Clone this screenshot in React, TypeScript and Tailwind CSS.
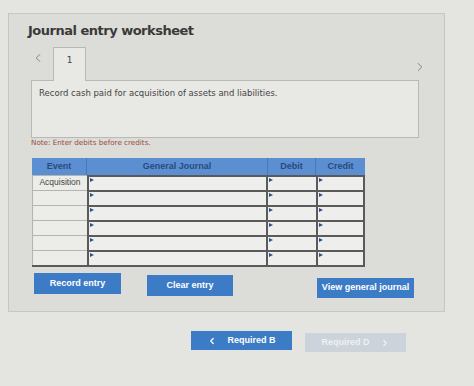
import { ChevronLeft, ChevronRight } from 'lucide-react';

const rows = ['Acquisition', '', '', '', '', ''];

const Marker = () => (
  <span className="absolute left-[1px] top-[1px] h-0 w-0 border-y-[2.5px] border-l-[4px] border-y-transparent border-l-[#2d4f86]" />
);

const App = () => {
  return (
    <div className="h-[386px] w-[474px] overflow-hidden bg-[#e4e4e0] pt-[13px] font-['DejaVu_Sans',sans-serif] text-[#333]">
      {/* Worksheet card */}
      <div className="ml-[8px] h-[299px] w-[437px] border border-[#c6c6c2] bg-[#dcdcd8] pl-[22px]">
        <h1 className="-ml-[3px] pt-[7px] text-[13px] font-bold leading-[20px] tracking-[-0.5px] text-[#3a3a3a]">
          Journal entry worksheet
        </h1>

        {/* Tabs */}
        <div className="mt-[6px] flex h-[33px] items-start">
          <ChevronLeft className="mt-[4px] h-[14px] w-[14px] text-[#777]" strokeWidth={1.5} />
          <div className="ml-[8px] flex h-[34px] w-[33px] justify-center border border-b-0 border-[#b8b8b4] bg-[#e8e8e5] pt-[6px] text-[9px] text-[#444]">
            1
          </div>
          <ChevronRight className="ml-[327px] mt-[13px] h-[14px] w-[14px] text-[#777]" strokeWidth={1.5} />
        </div>

        <div className="h-[58px] w-[388px] border border-[#b8b8b4] bg-[#e8e8e5] pl-[7px] pt-[6px] text-[8.5px] text-[#444]">
          Record cash paid for acquisition of assets and liabilities.
        </div>

        <p className="mt-[0px] text-[7.2px] text-[#9a4a3a]">Note: Enter debits before credits.</p>

        {/* Journal table */}
        <div className="ml-[1px] mt-[9px] w-[333px] font-['Liberation_Sans',sans-serif]">
          <div className="flex h-[17px] bg-[#5b8fd2] text-[9px] font-bold text-[#2a4a7c]">
            <div className="flex w-[55px] items-center justify-center border-r border-[#4a78b4]">Event</div>
            <div className="flex w-[181px] items-center justify-center border-r border-[#4a78b4]">General Journal</div>
            <div className="flex w-[48px] items-center justify-center border-r border-[#4a78b4]">Debit</div>
            <div className="flex w-[49px] items-center justify-center">Credit</div>
          </div>
          <div className="border-b-2 border-[#5a5a5a]">
            {rows.map((ev, i) => (
              <div key={i} className="flex h-[15px]">
                <div className="flex w-[55px] items-center justify-center border-l border-t border-[#b4b4b0] bg-[#ecece9] text-[8.5px] text-[#444]">
                  {ev}
                </div>
                <div className="relative w-[181px] border-x-2 border-t-2 border-[#5a5a5a] bg-[#eeeeec]">
                  <Marker />
                </div>
                <div className="relative w-[48px] border-t-2 border-[#5a5a5a] bg-[#eeeeec]">
                  <Marker />
                </div>
                <div className="relative w-[49px] border-x-2 border-t-2 border-[#5a5a5a] bg-[#eeeeec]">
                  <Marker />
                </div>
              </div>
            ))}
          </div>
        </div>

        {/* Actions */}
        <div className="mt-[6px] flex items-start font-['Liberation_Sans',sans-serif] text-[9px] font-bold text-white">
          <button className="ml-[3px] h-[21px] w-[87px] bg-[#3c7bc6]">Record entry</button>
          <button className="ml-[26px] mt-[2px] h-[21px] w-[86px] bg-[#3c7bc6]">Clear entry</button>
          <button className="ml-[84px] mt-[5px] h-[20px] w-[97px] bg-[#3c7bc6]">View general journal</button>
        </div>
      </div>

      {/* Part navigation */}
      <div className="mt-[19px] flex items-start font-['Liberation_Sans',sans-serif] text-[9px] font-bold">
        <button className="ml-[191px] flex h-[19px] w-[101px] items-center justify-center gap-[10px] bg-[#3c7bc6] text-white">
          <ChevronLeft className="h-[10px] w-[10px]" strokeWidth={3} />
          Required B
        </button>
        <button className="ml-[13px] mt-[2px] flex h-[19px] w-[101px] items-center justify-center gap-[10px] bg-[#cdd3da] text-[#eef0f3]">
          Required D
          <ChevronRight className="h-[10px] w-[10px]" strokeWidth={3} />
        </button>
      </div>
    </div>
  );
};

export default App;
